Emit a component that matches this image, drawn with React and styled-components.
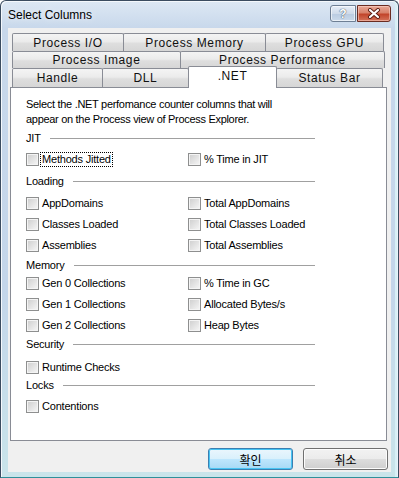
import styled, { createGlobalStyle } from "styled-components";

const GlobalStyle = createGlobalStyle`
  html, body {
    margin: 0;
    padding: 0;
    background: #ffffff;
  }
  body {
    font-family: "Liberation Sans", Arial, sans-serif;
    color: #000;
  }
`;

const tabRows = [
  {
    height: 18,
    tabs: [
      { label: "Process I/O", width: 112 },
      { label: "Process Memory", width: 143 },
      { label: "Process GPU", width: 119 },
    ],
  },
  {
    height: 17,
    tabs: [
      { label: "Process Image", width: 169 },
      { label: "Process Performance", width: 205 },
    ],
  },
  {
    height: 19,
    tabs: [
      { label: "Handle", width: 91 },
      { label: "DLL", width: 87 },
      { label: ".NET", width: 89, selected: true },
      { label: "Status Bar", width: 107 },
    ],
  },
];

const groups = [
  {
    title: "JIT",
    top: 3,
    gap: 4,
    items: [["Methods Jitted", "% Time in JIT"]],
  },
  {
    title: "Loading",
    top: 5,
    gap: 5,
    items: [
      ["AppDomains", "Total AppDomains"],
      ["Classes Loaded", "Total Classes Loaded"],
      ["Assemblies", "Total Assemblies"],
    ],
  },
  {
    title: "Memory",
    top: 3,
    gap: 1,
    items: [
      ["Gen 0 Collections", "% Time in GC"],
      ["Gen 1 Collections", "Allocated Bytes/s"],
      ["Gen 2 Collections", "Heap Bytes"],
    ],
  },
  {
    title: "Security",
    top: 2,
    gap: 6,
    items: [["Runtime Checks"]],
  },
  {
    title: "Locks",
    top: 1,
    gap: 4,
    items: [["Contentions"]],
  },
];

function Checkbox({ label, focused }) {
  return (
    <CheckItem>
      <Box />
      <CheckLabel $focused={focused}>{label}</CheckLabel>
    </CheckItem>
  );
}

export default function App() {
  return (
    <>
      <GlobalStyle />
      <Window>
        <TitleBar>
          <Title>Select Columns</Title>
          <CaptionButtons>
            <HelpButton>?</HelpButton>
            <CloseButton>
              <svg width="14" height="11" viewBox="0 0 14 11">
                <path d="M3 2 L11 9 M11 2 L3 9" stroke="#5a1a10" strokeWidth="4" strokeLinecap="round" />
                <path d="M3 2 L11 9 M11 2 L3 9" stroke="#ffffff" strokeWidth="2.2" strokeLinecap="round" />
              </svg>
            </CloseButton>
          </CaptionButtons>
        </TitleBar>

        <Client>
          <TabStrip>
            {tabRows.map((row, i) => (
              <TabRow key={i} $height={row.height}>
                {row.tabs.map((tab) => (
                  <Tab key={tab.label} $width={tab.width} $selected={tab.selected}>
                    {tab.label}
                  </Tab>
                ))}
              </TabRow>
            ))}
          </TabStrip>

          <Panel>
            <Description>
              Select the .NET perfomance counter columns that will
              <br />
              appear on the Process view of Process Explorer.
            </Description>

            {groups.map((group) => (
              <Group key={group.title} $top={group.top}>
                <GroupHeader>
                  <span>{group.title}</span>
                  <Rule />
                </GroupHeader>
                <CheckGrid $gap={group.gap}>
                  {group.items.map((pair) =>
                    pair.map((label) => (
                      <Checkbox key={label} label={label} focused={label === "Methods Jitted"} />
                    ))
                  )}
                </CheckGrid>
              </Group>
            ))}
          </Panel>

          <Footer>
            <Button $primary>확인</Button>
            <Button>취소</Button>
          </Footer>
        </Client>
      </Window>
    </>
  );
}

const Window = styled.div`
  width: 399px;
  height: 478px;
  box-sizing: border-box;
  display: flex;
  flex-direction: column;
  border: 1px solid #3b4c60;
  border-bottom-color: #2f8f9a;
  border-radius: 6px 6px 0 0;
  padding: 0 7px 5px 7px;
  background: linear-gradient(180deg, #dde8f4 0px, #c8d8eb 27px, #c4d6ea 60%, #c9e4ea 100%);
  box-shadow: inset 1px 1px 0 #f4f8fc, inset -1px 0 0 #e9f2fa, inset -3px 0 0 #d7f0f6;
`;

const TitleBar = styled.div`
  height: 27px;
  display: flex;
  align-items: flex-start;
`;

const Title = styled.span`
  font-size: 12px;
  line-height: 14px;
  margin-top: 7px;
  color: #000;
  text-shadow: 0 0 6px rgba(255, 255, 255, 0.9);
`;

const CaptionButtons = styled.div`
  margin-left: auto;
  margin-top: 4px;
  display: flex;
  gap: 1px;
`;

const HelpButton = styled.div`
  width: 26px;
  height: 17px;
  box-sizing: border-box;
  border: 1px solid #6e7f94;
  border-radius: 3px 0 0 3px;
  background: linear-gradient(180deg, #e6eef8 0%, #cfdbea 50%, #b9cbe1 51%, #cbdaeb 100%);
  box-shadow: inset 0 0 0 1px rgba(255, 255, 255, 0.6);
  display: flex;
  align-items: center;
  justify-content: center;
  font-size: 12px;
  font-weight: bold;
  color: #ffffff;
  text-shadow: 0 0 1px #3e4d60, 0 0 1px #3e4d60;
`;

const CloseButton = styled.div`
  width: 34px;
  height: 17px;
  box-sizing: border-box;
  border: 1px solid #6a2c22;
  border-radius: 0 3px 3px 0;
  background: linear-gradient(180deg, #e9a897 0%, #d8826b 45%, #c2452b 55%, #d4735a 100%);
  box-shadow: inset 0 0 0 1px rgba(255, 220, 210, 0.5);
  display: flex;
  align-items: center;
  justify-content: center;
`;

const Client = styled.div`
  flex: 1;
  display: flex;
  flex-direction: column;
  background: #f0f0f0;
  padding: 5px 4px 0 2px;
`;

const TabStrip = styled.div`
  display: flex;
  flex-direction: column;
  margin: 0 0 0 2px;
`;

const TabRow = styled.div`
  height: ${(p) => p.$height}px;
  display: flex;
`;

const Tab = styled.div`
  width: ${(p) => p.$width}px;
  box-sizing: border-box;
  height: ${(p) => (p.$selected ? "calc(100% + 3px)" : "100%")};
  margin-top: ${(p) => (p.$selected ? "-2px" : "0")};
  margin-left: -1px;
  position: ${(p) => (p.$selected ? "relative" : "static")};
  z-index: ${(p) => (p.$selected ? 1 : "auto")};
  border: 1px solid #898c95;
  border-bottom: none;
  border-radius: 2px 2px 0 0;
  background: ${(p) =>
    p.$selected ? "#ffffff" : "linear-gradient(180deg, #f4f4f4 0%, #ebebeb 45%, #dedede 55%, #d6d6d6 100%)"};
  font-size: 12px;
  letter-spacing: 0.6px;
  line-height: 1;
  display: flex;
  justify-content: center;
  align-items: ${(p) => (p.$selected ? "flex-start" : "center")};
  padding-top: ${(p) => (p.$selected ? "3px" : "0")};
  color: #111;
  white-space: nowrap;

  &:first-child {
    margin-left: 0;
  }
`;

const Panel = styled.div`
  height: 354px;
  box-sizing: border-box;
  border: 1px solid #898c95;
  background: #ffffff;
  padding: 9px 0 0 15px;
  display: flex;
  flex-direction: column;
`;

const Description = styled.div`
  font-size: 11px;
  line-height: 15px;
  letter-spacing: -0.3px;
`;

const Group = styled.div`
  margin-top: ${(p) => p.$top}px;
  display: flex;
  flex-direction: column;
`;

const GroupHeader = styled.div`
  width: 289px;
  height: 16px;
  display: flex;
  align-items: center;
  gap: 9px;
  font-size: 11px;
  letter-spacing: -0.2px;
`;

const Rule = styled.div`
  flex: 1;
  height: 0;
  border-top: 1px solid #a0a0a0;
`;

const CheckGrid = styled.div`
  margin-top: ${(p) => p.$gap}px;
  display: grid;
  grid-template-columns: 162px 1fr;
  grid-auto-rows: 18px;
  row-gap: 3px;
`;

const CheckItem = styled.div`
  display: flex;
  align-items: center;
  gap: 1px;
`;

const Box = styled.div`
  width: 13px;
  height: 13px;
  box-sizing: border-box;
  border: 1px solid #8e8f8f;
  background: linear-gradient(135deg, #cdcdcd 0%, #e2e2e2 50%, #f7f7f7 100%);
  box-shadow: inset 0 0 0 1px #f4f4f4;
`;

const CheckLabel = styled.span`
  font-size: 11px;
  line-height: 13px;
  letter-spacing: -0.2px;
  padding: 0 1px;
  border: 1px dotted ${(p) => (p.$focused ? "#000" : "transparent")};
  white-space: nowrap;
`;

const Footer = styled.div`
  flex: 1;
  display: flex;
  justify-content: flex-end;
  align-items: flex-start;
  padding: 7px 0 0 0;
  margin-right: -1px;
  gap: 10px;
`;

const Button = styled.div`
  width: 85px;
  height: 22px;
  box-sizing: border-box;
  border: 1px solid ${(p) => (p.$primary ? "#3c7fb1" : "#707070")};
  border-radius: 3px;
  background: ${(p) =>
    p.$primary
      ? "linear-gradient(180deg, #eaf6fd 0%, #d9f0fc 50%, #bee6fd 51%, #a7d9f5 100%)"
      : "linear-gradient(180deg, #f2f2f2 0%, #ebebeb 50%, #dddddd 51%, #cfcfcf 100%)"};
  box-shadow: inset 0 0 0 1px ${(p) => (p.$primary ? "#48c4f3" : "#fcfcfc")};
  display: flex;
  align-items: center;
  justify-content: center;
  font-family: "Noto Sans CJK KR", "Liberation Sans", sans-serif;
  font-size: 12px;
  color: #000;
`;
